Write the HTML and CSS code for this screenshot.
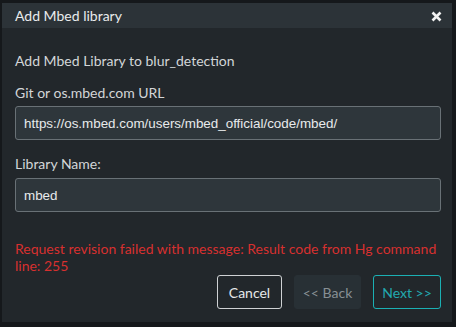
FILE: index.html
```html
<!DOCTYPE html>
<html>
<head>
<meta charset="utf-8">
<link rel="stylesheet" href="styles.css">
</head>
<body>
<div class="dialog">
  <div class="header">
    <span class="title">Add Mbed library</span>
    <svg class="close" width="11" height="11" viewBox="0 0 11 11"><path d="M1.5 1.5 L9.5 9.5 M9.5 1.5 L1.5 9.5" stroke="#f2f2f2" stroke-width="2.6" stroke-linecap="butt"/></svg>
  </div>
  <div class="content">
    <p class="intro">Add Mbed Library to blur_detection</p>
    <p class="label first">Git or os.mbed.com URL</p>
    <div class="field">https://os.mbed.com/users/mbed_official/code/mbed/</div>
    <p class="label">Library Name:</p>
    <div class="field">mbed</div>
    <p class="error">Request revision failed with message: Result code from Hg command line: 255</p>
    <div class="actions">
      <button class="btn cancel">Cancel</button>
      <button class="btn back">&lt;&lt; Back</button>
      <button class="btn next">Next &gt;&gt;</button>
    </div>
  </div>
</div>
</body>
</html>
```
FILE: styles.css
```css
html, body {
  margin: 0;
  padding: 0;
  background: #15181b;
  width: 456px;
  height: 327px;
  overflow: hidden;
}
.dialog {
  margin: 3px 0 0 2px;
  width: 450px;
  height: 319px;
  background: #22272b;
  font-family: Lato, "Liberation Sans", sans-serif;
  color: #d3d6d8;
  box-sizing: border-box;
}
.header {
  height: 25px;
  background: #2c3338;
  display: flex;
  align-items: center;
  justify-content: space-between;
  padding: 0 10px 0 13px;
}
.title {
  font-size: 14px;
  color: #e9ebec;
}
.close {
  display: block;
  margin-top: 1px;
}
.content {
  padding: 0 11px 0 13px;
  display: flex;
  flex-direction: column;
}
.content p {
  margin: 0;
  font-size: 14px;
  line-height: 17px;
}
.intro {
  margin-top: 24px !important;
}
.label {
  margin-top: 15px !important;
}
.field {
  margin-top: 6px;
  height: 34px;
  box-sizing: border-box;
  border: 1px solid #697176;
  border-radius: 3px;
  background: #2e363b;
  padding: 0 8px;
  display: flex;
  align-items: center;
  font-family: "Liberation Sans", Arial, sans-serif;
  font-size: 13.4px;
  color: #e8eaeb;
}
.label.first + .field {
  margin-top: 5px;
}
.error {
  margin-top: 28px !important;
  color: #d7302f;
}
.actions {
  margin-top: 1px;
  display: flex;
  justify-content: flex-end;
  gap: 12px;
}
.btn {
  height: 34px;
  box-sizing: border-box;
  font-family: Lato, "Liberation Sans", sans-serif;
  font-size: 14px;
  border-radius: 3px;
  padding: 0;
  background: transparent;
}
.cancel {
  width: 65px;
  border: 1px solid #cfd2d4;
  color: #e6e8e9;
}
.back {
  width: 67px;
  border: 1px solid #283035;
  background: #283035;
  color: #878f94;
}
.next {
  width: 68px;
  border: 1px solid #1bb0b4;
  color: #22a9b0;
}
```
